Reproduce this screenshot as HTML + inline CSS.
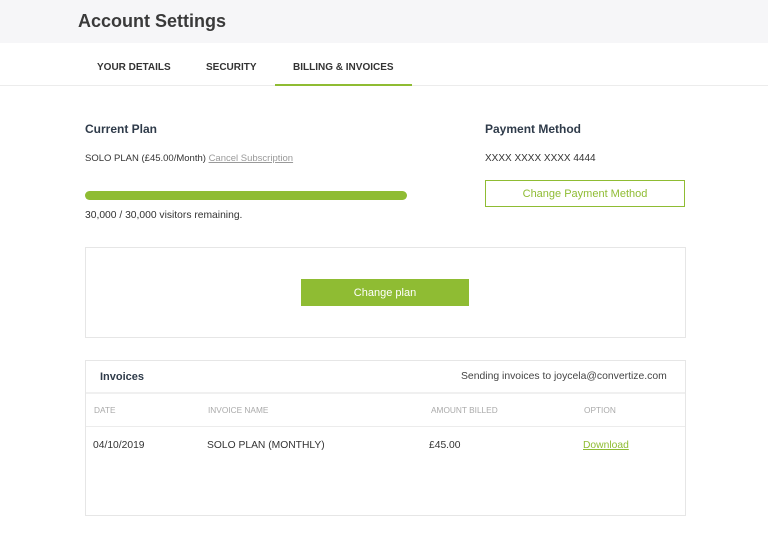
<!DOCTYPE html>
<html><head><style>
body{margin:0;width:768px;height:547px;background:#fff;font-family:"Liberation Sans",sans-serif;position:relative;overflow:hidden;color:#2f3b4a}
.a{position:absolute;white-space:nowrap}
</style></head><body>
<div class="a" style="left:0;top:0;width:768px;height:43px;background:#f6f6f8"></div>
<div class="a" style="left:78px;top:11px;font-size:18px;font-weight:bold;color:#3a3a3a">Account Settings</div>
<div class="a" style="left:0;top:85px;width:768px;height:1px;background:#ececec"></div>
<div class="a" style="left:97px;top:62px;font-size:10px;font-weight:bold;color:#333">YOUR DETAILS</div>
<div class="a" style="left:206px;top:62px;font-size:10px;font-weight:bold;color:#333">SECURITY</div>
<div class="a" style="left:293px;top:62px;font-size:10px;font-weight:bold;color:#333">BILLING &amp; INVOICES</div>
<div class="a" style="left:275px;top:84px;width:137px;height:2px;background:#8fbc33"></div>

<div class="a" style="left:85px;top:122px;font-size:12px;font-weight:bold;color:#2f3b4a">Current Plan</div>
<div class="a" style="left:85px;top:153px;font-size:9.5px;color:#333">SOLO PLAN (£45.00/Month) <span style="color:#999;text-decoration:underline">Cancel Subscription</span></div>
<div class="a" style="left:85px;top:191px;width:322px;height:9px;border-radius:5px;background:#8fbc33"></div>
<div class="a" style="left:85px;top:210px;font-size:10.3px;color:#333">30,000 / 30,000 visitors remaining.</div>

<div class="a" style="left:485px;top:122px;font-size:12px;font-weight:bold;color:#2f3b4a">Payment Method</div>
<div class="a" style="left:485px;top:153px;font-size:10px;color:#333">XXXX XXXX XXXX 4444</div>
<div class="a" style="left:485px;top:180px;width:198px;height:25px;border:1px solid #8fbc33;color:#8fbc33;font-size:11px;text-align:center;line-height:27px">Change Payment Method</div>

<div class="a" style="left:85px;top:247px;width:599px;height:89px;border:1px solid #e6e6e6"></div>
<div class="a" style="left:301px;top:279px;width:168px;height:27px;background:#8fbc33;color:#fff;font-size:11px;text-align:center;line-height:29px">Change plan</div>

<div class="a" style="left:85px;top:360px;width:599px;height:154px;border:1px solid #e6e6e6"></div>
<div class="a" style="left:86px;top:392px;width:599px;height:2px;background:#f0f0f0"></div>
<div class="a" style="left:86px;top:426px;width:599px;height:1px;background:#ececec"></div>
<div class="a" style="left:100px;top:371px;font-size:11px;font-weight:bold;color:#2f3b4a">Invoices</div>
<div class="a" style="left:461px;top:371px;font-size:10.4px;color:#444">Sending invoices to joycela@convertize.com</div>
<div class="a" style="left:94px;top:405px;font-size:8.3px;color:#aaa">DATE</div>
<div class="a" style="left:208px;top:405px;font-size:8.3px;color:#aaa">INVOICE NAME</div>
<div class="a" style="left:431px;top:405px;font-size:8.3px;color:#aaa">AMOUNT BILLED</div>
<div class="a" style="left:584px;top:405px;font-size:8.3px;color:#aaa">OPTION</div>
<div class="a" style="left:93px;top:440px;font-size:10.3px;color:#333">04/10/2019</div>
<div class="a" style="left:207px;top:440px;font-size:10.3px;color:#333">SOLO PLAN (MONTHLY)</div>
<div class="a" style="left:429px;top:440px;font-size:10.3px;color:#333">£45.00</div>
<div class="a" style="left:583px;top:440px;font-size:10.3px;color:#8fbc33;text-decoration:underline">Download</div>
</body></html>
